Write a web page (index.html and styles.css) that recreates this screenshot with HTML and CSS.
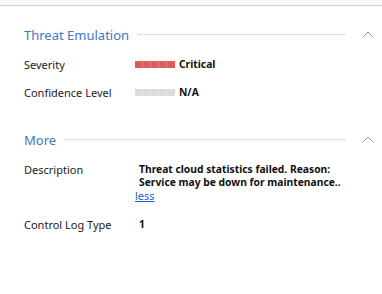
FILE: index.html
```html
<!DOCTYPE html>
<html>
<head>
<meta charset="utf-8">
<link rel="stylesheet" href="styles.css">
</head>
<body>
<div class="topbar"></div>
<section class="section first">
  <div class="section-header">
    <span class="title">Threat Emulation</span>
    <span class="dots"></span>
    <svg class="chev" width="12" height="7" viewBox="0 0 12 7"><path d="M0.5 6.5 L6 1 L11.5 6.5" fill="none" stroke="#9a9a9a" stroke-width="1"/></svg>
  </div>
  <div class="row">
    <div class="label">Severity</div>
    <div class="value">
      <span class="bar red"><i></i><i></i><i></i><i></i><i></i></span>
      <b class="strong">Critical</b>
    </div>
  </div>
  <div class="row">
    <div class="label">Confidence Level</div>
    <div class="value">
      <span class="bar gray"><i></i><i></i><i></i><i></i><i></i></span>
      <b class="strong">N/A</b>
    </div>
  </div>
</section>
<section class="section second">
  <div class="section-header">
    <span class="title">More</span>
    <span class="dots short"></span>
    <svg class="chev" width="12" height="7" viewBox="0 0 12 7"><path d="M0.5 6.5 L6 1 L11.5 6.5" fill="none" stroke="#9a9a9a" stroke-width="1"/></svg>
  </div>
  <div class="row desc">
    <div class="label">Description</div>
    <div class="value block">
      <div class="text">Threat cloud statistics failed. Reason: Service may be down for maintenance..</div>
      <a class="link" href="#">less</a>
    </div>
  </div>
  <div class="row last">
    <div class="label">Control Log Type</div>
    <div class="value"><b class="text">1</b></div>
  </div>
</section>
</body>
</html>
```
FILE: styles.css
```css
html, body {
  margin: 0;
  padding: 0;
  background: #ffffff;
}
body {
  font-family: "Noto Sans", "Open Sans", sans-serif;
  color: #222;
  width: 382px;
  height: 294px;
  overflow: hidden;
}
.topbar {
  height: 5px;
  background: #f7f7f7;
  border-bottom: 1px solid #d0d0d0;
}
.section {
  padding: 0 8px 0 24px;
}
.section.first {
  padding-top: 19px;
}
.section.second {
  padding-top: 30px;
}
.section-header {
  display: flex;
  align-items: center;
  height: 20px;
}
.title {
  font-size: 13px;
  color: #3a78c8;
  white-space: nowrap;
}
.dots {
  flex: 1;
  border-bottom: 1px dotted #c4c4c4;
  margin: -1px 17px 0 9px;
}
.dots.short {
  margin-left: 8px;
}
.chev {
  margin-top: -2px;
  flex: none;
}
.row {
  display: grid;
  grid-template-columns: 111px 1fr;
  align-items: center;
  font-size: 11px;
  margin-top: 12px;
  height: 16px;
}
.section-header + .row {
  margin-top: 11px;
}
.label {
  color: #222;
}
.value {
  display: flex;
  align-items: center;
}
.bar {
  display: flex;
  width: 40px;
  height: 7px;
  margin-right: 4px;
}
.bar i {
  flex: 1;
  box-shadow: inset -1px 0 rgba(255,255,255,0.25);
}
.bar i:last-child { box-shadow: none; }
.bar.red i { background: #df5c5c; }
.bar.gray i { background: #dcdcdc; }
.strong, .text {
  font-weight: bold;
  color: #111;
  font-size: 10.3px;
}
.text {
  padding-left: 4px;
  line-height: 13px;
}
.value.block {
  display: block;
  padding-right: 20px;
}
.row.desc {
  align-items: start;
  height: auto;
  margin-top: 13px;
  line-height: 13px;
}
.row.last {
  margin-top: 14px;
}
.link {
  color: #1a63c6;
  text-decoration: underline;
  font-size: 11px;
  line-height: 13px;
}
```
